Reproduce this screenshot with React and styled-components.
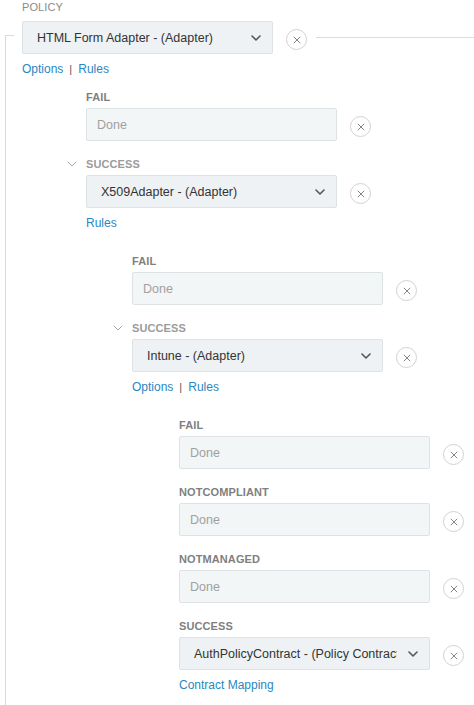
import React from "react";
import styled, { createGlobalStyle } from "styled-components";

const Global = createGlobalStyle`
  html, body { margin: 0; padding: 0; background: #ffffff; }
  body { font-family: "Liberation Sans", Arial, sans-serif; color: #333; }
`;

const Page = styled.div`
  width: 474px;
  height: 705px;
  overflow: hidden;
  position: relative;
`;

const SectionTitle = styled.div`
  padding-left: 22px;
  font-size: 11px;
  line-height: 14px;
  color: #8a8a8a;
  letter-spacing: 0.1px;
  margin-bottom: 7px;
`;

const Tree = styled.div`
  position: relative;
  padding-left: 22px;
  &::before {
    content: "";
    position: absolute;
    left: 5px;
    top: 14px;
    width: 8px;
    height: 900px;
    border-left: 1px solid #d9d9d9;
    border-top: 1px solid #d9d9d9;
  }
`;

const Node = styled.div`
  display: flex;
  flex-direction: column;
`;

const LabelRow = styled.div`
  display: flex;
  align-items: center;
  height: 14px;
  margin-bottom: 4px;
`;

const Caret = styled.svg`
  width: 10px;
  height: 6px;
  margin-left: -19px;
  margin-right: 9px;
  flex: none;
`;

const Label = styled.span`
  font-size: 11px;
  font-weight: 700;
  line-height: 14px;
  color: ${(p) => (p.$muted ? "#9b9b9b" : "#7f7f7f")};
  letter-spacing: 0.1px;
`;

const Row = styled.div`
  display: flex;
  align-items: center;
`;

const Field = styled.div`
  box-sizing: border-box;
  width: 251px;
  height: 33px;
  flex: none;
  display: flex;
  align-items: center;
  border: 1px solid #dde2e5;
  border-radius: 2px;
  background: ${(p) => (p.$select ? "#eef2f4" : "#f3f6f7")};
  padding: ${(p) => (p.$select ? "0 11px 0 14px" : "0 10px")};
  font-size: 12.5px;
  color: ${(p) => (p.$select ? "#333" : "#a0a0a0")};
`;

const FieldText = styled.span`
  flex: 1;
  overflow: hidden;
  white-space: nowrap;
`;

const SelectCaret = styled.svg`
  width: 10px;
  height: 6px;
  flex: none;
  margin-left: 11px;
`;

const Remove = styled.button`
  box-sizing: border-box;
  width: 21px;
  height: 21px;
  margin-left: 13px;
  margin-top: 4px;
  flex: none;
  border: 1px solid #d2d2d2;
  border-radius: 50%;
  background: #fff;
  padding: 0;
  display: flex;
  align-items: center;
  justify-content: center;
`;

const TrailLine = styled.div`
  flex: 1;
  height: 1px;
  background: #dcdcdc;
  margin-left: 9px;
`;

const Links = styled.div`
  display: flex;
  align-items: center;
  margin-top: 7px;
  height: 16px;
  font-size: 12px;
  line-height: 16px;
`;

const Link = styled.a`
  color: #2a87c1;
  text-decoration: none;
  font-weight: 500;
`;

const Sep = styled.span`
  color: #555;
  margin: 0 6px;
  font-size: 11px;
`;

const Children = styled.div`
  display: flex;
  flex-direction: column;
  gap: 16px;
  padding-left: ${(p) => p.$indent}px;
  margin-top: ${(p) => p.$top}px;
`;

const XIcon = () => (
  <svg width="10" height="10" viewBox="0 0 10 10">
    <path d="M1.8 1.8 L8.2 8.2 M8.2 1.8 L1.8 8.2" stroke="#858585" strokeWidth="1" fill="none" />
  </svg>
);

const Chevron = () => (
  <SelectCaret viewBox="0 0 10 6">
    <path d="M1 1 L5 5 L9 1" stroke="#555" strokeWidth="1.6" fill="none" strokeLinecap="round" strokeLinejoin="round" />
  </SelectCaret>
);

const tree = {
  value: "HTML Form Adapter - (Adapter)",
  links: ["Options", "Rules"],
  indent: 64,
  top: 13,
  children: [
    { label: "FAIL" },
    {
      label: "SUCCESS",
      collapsible: true,
      value: "X509Adapter - (Adapter)",
      links: ["Rules"],
      indent: 46,
      top: 23,
      children: [
        { label: "FAIL" },
        {
          label: "SUCCESS",
          collapsible: true,
          value: "Intune - (Adapter)",
          links: ["Options", "Rules"],
          indent: 47,
          top: 23,
          children: [
            { label: "FAIL" },
            { label: "NOTCOMPLIANT" },
            { label: "NOTMANAGED" },
            {
              label: "SUCCESS",
              value: "AuthPolicyContract - (Policy Contract)",
              links: ["Contract Mapping"],
            },
          ],
        },
      ],
    },
  ],
};

function Branch({ node, root }) {
  const isSelect = !!node.value;
  return (
    <Node>
      {node.label && (
        <LabelRow>
          {node.collapsible && (
            <Caret viewBox="0 0 10 6">
              <path d="M0.8 0.8 L5 5 L9.2 0.8" stroke="#a8a8a8" strokeWidth="1" fill="none" />
            </Caret>
          )}
          <Label $muted={node.collapsible}>{node.label}</Label>
        </LabelRow>
      )}
      <Row>
        <Field $select={isSelect}>
          <FieldText>{isSelect ? node.value : "Done"}</FieldText>
          {isSelect && <Chevron />}
        </Field>
        <Remove aria-label="remove">
          <XIcon />
        </Remove>
        {root && <TrailLine />}
      </Row>
      {node.links && (
        <Links>
          {node.links.map((l, i) => (
            <React.Fragment key={l}>
              {i > 0 && <Sep>|</Sep>}
              <Link href="#">{l}</Link>
            </React.Fragment>
          ))}
        </Links>
      )}
      {node.children && (
        <Children $indent={node.indent} $top={node.top}>
          {node.children.map((c, i) => (
            <Branch key={i} node={c} />
          ))}
        </Children>
      )}
    </Node>
  );
}

export default function App() {
  return (
    <Page>
      <Global />
      <SectionTitle>POLICY</SectionTitle>
      <Tree>
        <Branch node={tree} root />
      </Tree>
    </Page>
  );
}
